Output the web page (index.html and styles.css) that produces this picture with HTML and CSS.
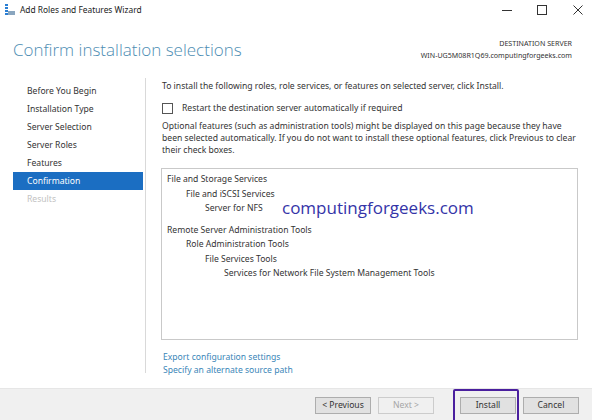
FILE: index.html
```html
<!DOCTYPE html>
<html>
<head>
<meta charset="utf-8">
<link rel="stylesheet" href="styles.css">
</head>
<body>
<div class="window">
  <div class="titlebar">
    <svg class="app-icon" width="12" height="12" viewBox="0 0 12 12">
      <rect x="1" y="0" width="3" height="2" fill="#2a7fd4"/>
      <rect x="1" y="3" width="3" height="2" fill="#2a7fd4"/>
      <rect x="1" y="6" width="3" height="2" fill="#2a7fd4"/>
      <rect x="4" y="7" width="7" height="4" fill="#8aa6bf"/>
      <rect x="1" y="9" width="3" height="2" fill="#2a7fd4"/>
    </svg>
    <span class="title-text">Add Roles and Features Wizard</span>
    <div class="controls">
      <svg width="10" height="10" viewBox="0 0 10 10"><line x1="0" y1="5.5" x2="10" y2="5.5" stroke="#333" stroke-width="1"/></svg>
      <svg width="10" height="10" viewBox="0 0 10 10"><rect x="0.5" y="0.5" width="9" height="9" fill="none" stroke="#333" stroke-width="1"/></svg>
      <svg width="10" height="10" viewBox="0 0 10 10"><path d="M0.5 0.5 L9.5 9.5 M9.5 0.5 L0.5 9.5" stroke="#333" stroke-width="1"/></svg>
    </div>
  </div>
  <div class="header">
    <h1 class="page-title">Confirm installation selections</h1>
    <div class="dest">
      <div>DESTINATION SERVER</div>
      <div>WIN-UG5M08R1Q69.computingforgeeks.com</div>
    </div>
  </div>
  <div class="main">
    <nav class="nav">
      <div class="nav-item">Before You Begin</div>
      <div class="nav-item">Installation Type</div>
      <div class="nav-item">Server Selection</div>
      <div class="nav-item">Server Roles</div>
      <div class="nav-item">Features</div>
      <div class="nav-item active">Confirmation</div>
      <div class="nav-item disabled">Results</div>
    </nav>
    <div class="content">
      <p class="intro">To install the following roles, role services, or features on selected server, click Install.</p>
      <label class="check-row"><span class="checkbox"></span>Restart the destination server automatically if required</label>
      <p class="optional">Optional features (such as administration tools) might be displayed on this page because they have been selected automatically. If you do not want to install these optional features, click Previous to clear their check boxes.</p>
      <div class="selection-box">
        <div class="group">
          <div class="lv0">File and Storage Services</div>
          <div class="lv1">File and iSCSI Services</div>
          <div class="lv2">Server for NFS</div>
        </div>
        <div class="group">
          <div class="lv0">Remote Server Administration Tools</div>
          <div class="lv1">Role Administration Tools</div>
          <div class="lv2">File Services Tools</div>
          <div class="lv3">Services for Network File System Management Tools</div>
        </div>
        <div class="watermark">computingforgeeks.com</div>
      </div>
      <div class="links">
        <a class="link">Export configuration settings</a>
        <a class="link">Specify an alternate source path</a>
      </div>
    </div>
  </div>
  <div class="footer">
    <button class="btn">&lt; Previous</button>
    <button class="btn disabled">Next &gt;</button>
    <button class="btn install">Install</button>
    <button class="btn">Cancel</button>
    <div class="highlight-mark"></div>
  </div>
</div>
</body>
</html>
```

FILE: styles.css
```css
html, body {
  margin: 0;
  padding: 0;
  background: #ffffff;
}
body {
  font-family: "Noto Sans", "Open Sans", "DejaVu Sans", sans-serif;
  color: #333;
}
.window {
  width: 592px;
  height: 420px;
  display: flex;
  flex-direction: column;
  position: relative;
  overflow: hidden;
  background: #fff;
}
.titlebar {
  height: 19px;
  display: flex;
  align-items: center;
  padding-left: 4px;
  flex-shrink: 0;
}
.app-icon { margin-right: 4px; }
.title-text {
  font-size: 8.4px;
  color: #222;
}
.controls {
  margin-left: auto;
  display: flex;
  gap: 26px;
  padding-right: 9px;
  align-items: center;
}
.controls svg:first-child { margin-right: -1px; }
.header {
  height: 59px;
  display: flex;
  align-items: center;
  justify-content: space-between;
  padding: 0 20px 0 13px;
  flex-shrink: 0;
}
.page-title {
  margin: 0;
  font-family: "Open Sans", "Noto Sans", sans-serif;
  font-weight: 300;
  font-size: 17px;
  color: #4d8db3;
  margin-top: 1px;
}
.dest {
  text-align: right;
  font-size: 7.1px;
  line-height: 12px;
  color: #333;
}
.main {
  flex: 1;
  display: flex;
  min-height: 0;
}
.nav {
  width: 132px;
  margin-left: 13px;
  border-right: 1px solid #d9d9d9;
  padding-top: 4px;
  margin-bottom: 15px;
}
.nav-item {
  height: 18px;
  line-height: 18px;
  font-size: 8.6px;
  padding-left: 14px;
  color: #333;
}
.nav-item.active {
  background: #1b6ec2;
  color: #fff;
  margin-right: 2px;
}
.nav-item.disabled { color: #c2c2c2; }
.content {
  flex: 1;
  padding: 2px 14px 0 15px;
  font-size: 8.6px;
  display: flex;
  flex-direction: column;
}
.intro {
  margin: 0;
  line-height: 12px;
  padding-left: 1px;
}
.check-row {
  display: flex;
  align-items: center;
  margin-top: 10px;
  line-height: 12px;
  padding-left: 1px;
}
.checkbox {
  width: 9px;
  height: 9px;
  border: 1px solid #555;
  margin-right: 9px;
  background: #fff;
}
.optional {
  margin: 6px 0 0 0;
  line-height: 12px;
  padding-left: 1px;
}
.selection-box {
  margin-top: 12px;
  height: 167px;
  border: 1px solid #c9c9c9;
  padding: 3px 5px 0 5px;
  position: relative;
  line-height: 14.5px;
}
.group + .group { margin-top: 7px; }
.lv1 { padding-left: 19px; }
.lv2 { padding-left: 38px; }
.lv3 { padding-left: 57px; }
.watermark {
  position: absolute;
  left: 120px;
  top: 29px;
  font-family: "Open Sans", "Noto Sans", sans-serif;
  font-size: 17px;
  line-height: 20px;
  color: #3434a8;
}
.links {
  margin-top: 11px;
  display: flex;
  flex-direction: column;
  padding-left: 2px;
}
.link {
  color: #3a86b8;
  line-height: 13px;
}
.footer {
  height: 32px;
  background: #f0f0f0;
  border-top: 1px solid #e6e6e6;
  display: flex;
  align-items: center;
  justify-content: flex-end;
  padding-right: 13px;
  flex-shrink: 0;
  position: relative;
  padding-top: 2px;
  box-sizing: border-box;
}
.btn {
  width: 56px;
  height: 17px;
  border: 1px solid #adadad;
  background: #e1e1e1;
  font-family: "Noto Sans", "Open Sans", sans-serif;
  font-size: 8.6px;
  color: #333;
  padding: 0;
  margin-left: 7px;
  line-height: 15px;
}
.btn.disabled {
  color: #a6a6a6;
  border-color: #cccccc;
  background: #f0f0f0;
}
.btn.install { margin-left: 26px; }
.highlight-mark {
  position: absolute;
  left: 453px;
  top: 0px;
  width: 62px;
  height: 30px;
  border: 2px solid #4a1f9e;
  border-radius: 2px;
}
```
